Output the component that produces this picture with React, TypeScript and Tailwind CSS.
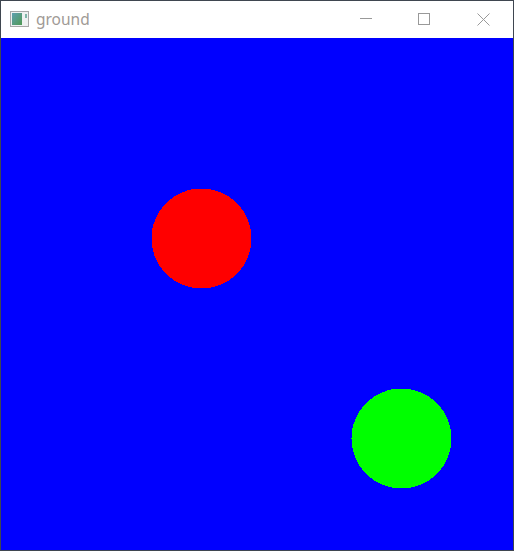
export default function App() {
  return (
    <div className="relative flex h-[551px] w-[514px] flex-col overflow-hidden border border-[#3f4650] bg-white font-['Noto_Sans',sans-serif]">
      <div className="flex h-[37px] shrink-0 items-center bg-white">
        <svg className="ml-[9px] shrink-0" width="20" height="17" viewBox="0 0 20 17">
          <defs>
            <linearGradient id="iconFill" x1="0" y1="0" x2="1" y2="1">
              <stop offset="0" stopColor="#5f9fb0" />
              <stop offset="1" stopColor="#4f9a55" />
            </linearGradient>
          </defs>
          <rect x="0.5" y="0.5" width="18" height="15" fill="#eef1f1" stroke="#a8a8a8" />
          <rect x="2" y="2" width="10" height="12" fill="url(#iconFill)" />
          <rect x="15" y="3" width="2" height="4" fill="#7fb5a8" />
        </svg>
        <span className="ml-[6px] text-[15.5px] leading-none text-[#a09a96]">ground</span>
        <div className="ml-auto flex items-center">
          <svg className="mr-[46px]" width="12" height="13" viewBox="0 0 12 13">
            <line x1="0" y1="5.5" x2="12" y2="5.5" stroke="#999999" />
          </svg>
          <svg className="mr-[46px]" width="13" height="13" viewBox="0 0 13 13">
            <rect x="0.5" y="0.5" width="11" height="11" fill="none" stroke="#999999" />
          </svg>
          <svg className="mr-[23px]" width="13" height="13" viewBox="0 0 13 13">
            <path d="M0.5 0.5L12.5 12.5M12.5 0.5L0.5 12.5" fill="none" stroke="#999999" />
          </svg>
        </div>
      </div>
      <div className="relative flex-1 bg-[#0000ff]">
        <svg className="absolute left-0 top-0 h-full w-full" shapeRendering="crispEdges">
          <circle cx="200.5" cy="200.5" r="50" fill="#ff0000" />
          <circle cx="400.5" cy="400.5" r="50" fill="#00ff00" />
        </svg>
      </div>
    </div>
  );
}
